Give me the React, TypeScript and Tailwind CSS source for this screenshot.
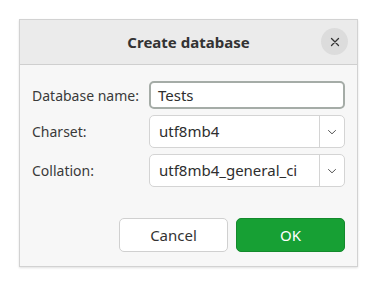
import React from "react";

function Chevron() {
  return (
    <svg width="12" height="12" viewBox="0 0 12 12" fill="none">
      <path d="M2.5 4.5 L6 7.8 L9.5 4.5" stroke="#555" strokeWidth="1" strokeLinecap="round" strokeLinejoin="round" />
    </svg>
  );
}

function Select({ value }: { value: string }) {
  return (
    <div className="flex h-[33px] w-[196px] items-stretch rounded-[5px] border border-[#d4d4d4] bg-white">
      <div className="flex flex-1 items-center pl-[9px] text-[15px] text-[#2e2e2e]">{value}</div>
      <div className="flex w-[25px] items-center justify-center border-l border-[#d4d4d4]">
        <Chevron />
      </div>
    </div>
  );
}

export default function App() {
  return (
    <div className="h-[287px] w-[377px] bg-white pl-[19px] pt-[19px]" style={{ fontFamily: '"Noto Sans", sans-serif' }}>
      <div className="flex h-[248px] w-[339px] flex-col border border-[#d2d2d2] bg-[#f7f7f7] shadow-[0_1px_2px_rgba(0,0,0,0.12)]">
        <div className="relative flex h-[45px] shrink-0 items-center justify-center border-b border-[#cfcfcf] bg-[#ebebeb]">
          <span className="text-[15px] font-bold text-[#333]">Create database</span>
          <div className="absolute right-[9px] top-[8px] flex h-[27px] w-[27px] items-center justify-center rounded-full bg-[#dcdcdc]">
            <svg width="10" height="10" viewBox="0 0 10 10">
              <path d="M1.5 1.5 L8.5 8.5 M8.5 1.5 L1.5 8.5" stroke="#333" strokeWidth="1.3" strokeLinecap="round" />
            </svg>
          </div>
        </div>
        <div className="flex flex-1 flex-col pl-[12px] pt-[16px]">
          <div className="grid grid-cols-[108px_196px] items-center gap-x-[9px] gap-y-[6px]">
            <span className="whitespace-nowrap text-[14px] text-[#3a3a3a]">Database name:</span>
            <div className="flex h-[28px] w-[196px] items-center rounded-[5px] border-2 border-[#a5aca7] bg-white pl-[7px] text-[15px] text-[#2e2e2e]">
              Tests
            </div>
            <span className="whitespace-nowrap text-[14px] text-[#3a3a3a]">Charset:</span>
            <Select value="utf8mb4" />
            <span className="whitespace-nowrap text-[14px] text-[#3a3a3a]">Collation:</span>
            <Select value="utf8mb4_general_ci" />
          </div>
          <div className="mt-[31px] flex w-[313px] justify-end gap-[8px]">
            <button className="flex h-[34px] w-[109px] items-center justify-center rounded-[5px] border border-[#d0d0d0] bg-white text-[15px] text-[#333]">
              Cancel
            </button>
            <button className="flex h-[34px] w-[109px] items-center justify-center rounded-[5px] border border-[#138a2c] bg-[#17a034] text-[15px] text-white">
              OK
            </button>
          </div>
        </div>
      </div>
    </div>
  );
}
